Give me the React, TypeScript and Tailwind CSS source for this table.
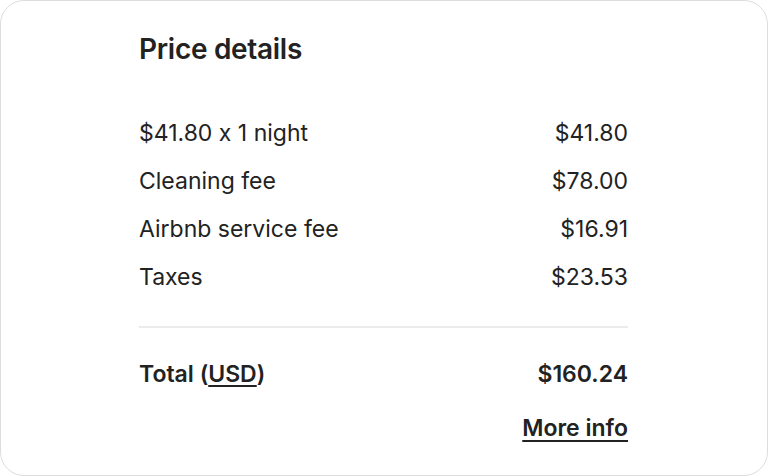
export default function App() {
  const rows: [string, string][] = [
    ["$41.80 x 1 night", "$41.80"],
    ["Cleaning fee", "$78.00"],
    ["Airbnb service fee", "$16.91"],
    ["Taxes", "$23.53"],
  ];
  return (
    <div
      className="w-[768px] h-[476px] bg-white"
      style={{ fontFamily: "Inter, 'Noto Sans', sans-serif", fontFeatureSettings: "'calt' 0" }}
    >
      <div className="h-full border border-[#dddddd] rounded-[24px] pl-[138px] pr-[139px] pt-[30px] text-[#222222]">
        <h2 className="text-[28px] leading-[36px] font-semibold tracking-[-0.3px]">Price details</h2>
        <div className="mt-[51px] flex flex-col gap-[18px]">
          {rows.map(([l, r]) => (
            <div key={l} className="flex justify-between text-[23px] leading-[30px]">
              <span>{l}</span>
              <span>{r}</span>
            </div>
          ))}
        </div>
        <div className="mt-[34px] h-[2px] bg-[#ebebeb]" />
        <div className="mt-[31px] flex justify-between text-[23px] leading-[30px] font-semibold">
          <span>
            Total (<span className="underline underline-offset-[3px]">USD</span>)
          </span>
          <span>$160.24</span>
        </div>
        <div className="mt-[24px] flex justify-end text-[23px] leading-[30px] font-semibold">
          <span className="underline underline-offset-[4px]">More info</span>
        </div>
      </div>
    </div>
  );
}
